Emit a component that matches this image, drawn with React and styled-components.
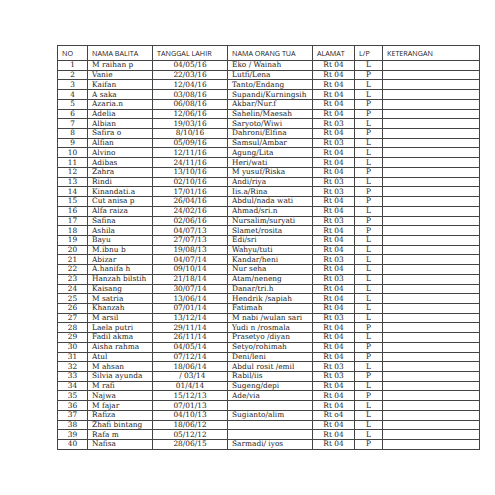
import React from 'react';
import styled, { createGlobalStyle } from 'styled-components';

const GlobalStyle = createGlobalStyle`
  html, body {
    margin: 0;
    padding: 0;
    background: #fff;
  }
`;

const Page = styled.div`
  width: 495px;
  height: 495px;
  padding: 45px 0 0 57px;
  box-sizing: border-box;
`;

const Table = styled.table`
  width: 422px;
  border-collapse: collapse;
  table-layout: fixed;
  color: #222;
`;

const HeadCell = styled.th`
  height: 15px;
  padding: 2px 0 0 4px;
  border: 1px solid #444;
  font-family: "Open Sans", "Liberation Sans", sans-serif;
  font-size: 7.2px;
  font-weight: 400;
  text-align: left;
  vertical-align: top;
  white-space: nowrap;
  box-sizing: border-box;
`;

const Row = styled.tr`
  height: 9.725px;
`;

const Cell = styled.td`
  padding: 0 0 0 ${(p) => (p.$align === 'left' ? '4px' : '0')};
  border: 1px solid #444;
  font-family: "DejaVu Serif", "Liberation Serif", serif;
  font-size: 7.4px;
  line-height: 8px;
  text-align: ${(p) => p.$align || 'center'};
  white-space: pre;
  overflow: hidden;
`;

const columns = [
  { title: 'NO', width: 30 },
  { title: 'NAMA BALITA', width: 65 },
  { title: 'TANGGAL LAHIR', width: 75 },
  { title: 'NAMA ORANG TUA', width: 85 },
  { title: 'ALAMAT', width: 42 },
  { title: 'L/P', width: 28 },
  { title: 'KETERANGAN', width: 97 },
];

const rows = [
  ['M raihan p', '04/05/16', 'Eko / Wainah', 'Rt 04', 'L'],
  ['Vanie', '22/03/16', 'Lutfi/Lena', 'Rt 04', 'P'],
  ['Kaifan', '12/04/16', 'Tanto/Endang', 'Rt 04', 'L'],
  ['A saka', '03/08/16', 'Supandi/Kurningsih', 'Rt 04', 'L'],
  ['Azaria.n', '06/08/16', 'Akbar/Nur.f', 'Rt 04', 'P'],
  ['Adelia', '12/06/16', 'Sahelin/Maesah', 'Rt 04', 'P'],
  ['Albian', '19/03/16', 'Saryoto/Wiwi', 'Rt 03', 'L'],
  ['Safira o', '8/10/16', 'Dahroni/Elfina', 'Rt 04', 'P'],
  ['Alfian', '05/09/16', 'Samsul/Ambar', 'Rt 03', 'L'],
  ['Alvino', '12/11/16', 'Agung/Lita', 'Rt 04', 'L'],
  ['Adibas', '24/11/16', 'Heri/wati', 'Rt 04', 'L'],
  ['Zahra', '13/10/16', 'M yusuf/Riska', 'Rt 04', 'P'],
  ['Rindi', '02/10/16', 'Andi/riya', 'Rt 03', 'L'],
  ['Kinandati.a', '17/01/16', 'Iis.a/Rina', 'Rt 03', 'P'],
  ['Cut anisa p', '26/04/16', 'Abdul/nada wati', 'Rt 04', 'P'],
  ['Alfa raiza', '24/02/16', 'Ahmad/sri.n', 'Rt 04', 'L'],
  ['Safina', '02/06/16', 'Nursalim/suryati', 'Rt 03', 'P'],
  ['Ashila', '04/07/13', 'Slamet/rosita', 'Rt 04', 'P'],
  ['Bayu', '27/07/13', 'Edi/sri', 'Rt 04', 'L'],
  ['M.ibnu b', '19/08/13', 'Wahyu/tuti', 'Rt 04', 'L'],
  ['Abizar', '04/07/14', 'Kandar/heni', 'Rt 03', 'L'],
  ['A.hanifa h', '09/10/14', 'Nur seha', 'Rt 04', 'L'],
  ['Hanzah bilstih', '21/18/14', 'Atam/neneng', 'Rt 03', 'L'],
  ['Kaisang', '30/07/14', 'Danar/tri.h', 'Rt 04', 'L'],
  ['M satria', '13/06/14', 'Hendrik /sapiah', 'Rt 04', 'L'],
  ['Khanzah', '07/01/14', 'Fatimah', 'Rt 04', 'L'],
  ['M arsil', '13/12/14', 'M nabi /wulan sari', 'Rt 03', 'L'],
  ['Laela putri', '29/11/14', 'Yudi n /rosmala', 'Rt 04', 'P'],
  ['Fadil akma', '26/11/14', 'Prasetyo /diyan', 'Rt 04', 'L'],
  ['Aisha rahma', '04/05/14', 'Setyo/rohimah', 'Rt 04', 'P'],
  ['Atul', '07/12/14', 'Deni/leni', 'Rt 04', 'P'],
  ['M ahsan', '18/06/14', 'Abdul rosit /emil', 'Rt 03', 'L'],
  ['Silvia ayunda', '  / 03/14', 'Rabil/iis', 'Rt 03', 'P'],
  ['M rafi', '01/4/14', 'Sugeng/depi', 'Rt 04', 'L'],
  ['Najwa', '15/12/13', 'Ade/via', 'Rt 04', 'P'],
  ['M fajar', '07/01/13', '', 'Rt 04', 'L'],
  ['Rafiza', '04/10/13', 'Sugianto/alim', 'Rt o4', 'L'],
  ['Zhafi bintang', '18/06/12', '', 'Rt 04', 'L'],
  ['Rafa m', '05/12/12', '', 'Rt 04', 'L'],
  ['Nafisa', '28/06/15', 'Sarmadi/ iyos', 'Rt 04', 'P'],
];

export default function App() {
  return (
    <Page>
      <GlobalStyle />
      <Table>
        <colgroup>
          {columns.map((c) => (
            <col key={c.title} style={{ width: c.width }} />
          ))}
        </colgroup>
        <thead>
          <tr>
            {columns.map((c) => (
              <HeadCell key={c.title}>{c.title}</HeadCell>
            ))}
          </tr>
        </thead>
        <tbody>
          {rows.map((r, i) => (
            <Row key={i}>
              <Cell>{i + 1}</Cell>
              <Cell $align="left">{r[0]}</Cell>
              <Cell>{r[1]}</Cell>
              <Cell $align="left">{r[2]}</Cell>
              <Cell>{r[3]}</Cell>
              <Cell>{r[4]}</Cell>
              <Cell />
            </Row>
          ))}
        </tbody>
      </Table>
    </Page>
  );
}
